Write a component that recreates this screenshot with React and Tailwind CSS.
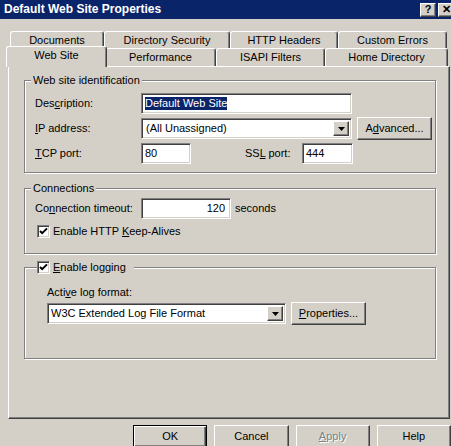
import React from "react";

const raised =
  "border border-t-white border-l-white border-r-[#404040] border-b-[#404040] shadow-[inset_-1px_-1px_0_#808080,inset_1px_1px_0_#d4d0c8]";
const sunken =
  "bg-white border border-t-[#808080] border-l-[#808080] border-b-white border-r-white shadow-[inset_1px_1px_0_#404040,inset_-1px_-1px_0_#d4d0c8]";
const etched =
  "relative border border-[#808080] shadow-[1px_1px_0_#fff,inset_1px_1px_0_#fff]";

const Arrow = () => (
  <div className={`${raised} bg-[#d4d0c8] w-[16px] h-full flex items-center justify-center`}>
    <svg width="7" height="4" viewBox="0 0 7 4">
      <polygon points="0,0 7,0 3.5,4" fill="#000" />
    </svg>
  </div>
);

const Check = ({ className = "" }) => (
  <div className={`${sunken} w-[13px] h-[13px] flex items-center justify-center shrink-0 ${className}`}>
    <svg width="9" height="9" viewBox="0 0 9 9">
      <polyline points="1,4 3.2,6.2 8,1.4" fill="none" stroke="#000" strokeWidth="2" />
    </svg>
  </div>
);

const Button = ({ children, className = "" }) => (
  <div className={`${raised} bg-[#d4d0c8] h-[23px] flex items-center justify-center ${className}`}>
    {children}
  </div>
);

const Tab = ({ label, w, selected }) => (
  <div
    className={`${w} flex items-center justify-center rounded-t-[3px] border-t border-l border-t-white border-l-white border-r border-r-[#404040] shadow-[inset_-1px_0_0_#808080] bg-[#d4d0c8] ${
      selected ? "relative z-10 h-[21px] self-start -mt-[2px] -mx-[2px] pb-[3px]" : "h-full"
    }`}
  >
    {label}
  </div>
);

export default function App() {
  return (
    <div className="w-[451px] h-[446px] overflow-hidden bg-[#d4d0c8] text-[11px] leading-[13px] text-black font-['Liberation_Sans',Arial,sans-serif]">
      {/* title bar */}
      <div className="h-[19px] bg-[#0a246a] flex items-center justify-between pl-[4px]">
        <span className="text-white font-bold text-[12px]">Default Web Site Properties</span>
        <div className="flex gap-[2px] -mr-[3px]">
          <Button className="!h-[14px] w-[16px] font-bold text-[11px]">?</Button>
          <Button className="!h-[14px] w-[16px] font-bold text-[11px]">✕</Button>
        </div>
      </div>

      {/* tabs */}
      <div className="mt-[12px] pl-[8px]">
        <div className="flex pl-[2px] h-[17px]">
          <Tab label="Documents" w="w-[94px]" />
          <Tab label="Directory Security" w="w-[126px]" />
          <Tab label="HTTP Headers" w="w-[108px]" />
          <Tab label="Custom Errors" w="w-[109px]" />
        </div>
        <div className="flex h-[18px]">
          <Tab label="Web Site" w="w-[101px]" selected />
          <Tab label="Performance" w="w-[111px]" />
          <Tab label="ISAPI Filters" w="w-[109px]" />
          <Tab label="Home Directory" w="w-[123px]" />
        </div>
      </div>

      {/* panel */}
      <div className="ml-[8px] w-[442px] h-[353px] border border-t-white border-l-white border-r-[#404040] border-b-[#404040] shadow-[inset_-1px_-1px_0_#808080] pt-[13px] pl-[15px]">
        {/* Web site identification */}
        <div className={`${etched} w-[412px] pt-[12px] pb-[8px] pl-[10px]`}>
          <span className="absolute left-[6px] -top-[7px] bg-[#d4d0c8] px-[2px]">Web site identification</span>
          <div className="flex flex-col gap-[4px]">
            <div className="flex items-center h-[21px]">
              <span className="w-[106px]">
                Des<u>c</u>ription:
              </span>
              <div className={`${sunken} w-[211px] h-[21px] flex items-center pl-[3px]`}>
                <span className="bg-[#0a246a] text-white">Default Web Site</span>
              </div>
            </div>
            <div className="flex items-center h-[21px]">
              <span className="w-[106px]">
                <u>I</u>P address:
              </span>
              <div className={`${sunken} w-[211px] h-[21px] flex items-center p-[2px]`}>
                <span className="flex-1 pl-[2px]">(All Unassigned)</span>
                <Arrow />
              </div>
              <Button className="ml-[5px] w-[75px]">
                A<u>d</u>vanced...
              </Button>
            </div>
            <div className="flex items-center h-[21px]">
              <span className="w-[106px]">
                <u>T</u>CP port:
              </span>
              <div className={`${sunken} w-[50px] h-[21px] flex items-center pl-[3px]`}>80</div>
              <span className="ml-[54px] w-[57px]">
                SS<u>L</u> port:
              </span>
              <div className={`${sunken} w-[51px] h-[21px] flex items-center pl-[3px]`}>444</div>
            </div>
          </div>
        </div>

        {/* Connections */}
        <div className={`${etched} w-[412px] mt-[15px] pt-[9px] pb-[15px] pl-[10px]`}>
          <span className="absolute left-[6px] -top-[7px] bg-[#d4d0c8] px-[2px]">Connections</span>
          <div className="flex items-center h-[21px]">
            <span className="w-[106px]">
              Co<u>n</u>nection timeout:
            </span>
            <div className={`${sunken} w-[90px] h-[21px] flex items-center justify-end pr-[5px]`}>120</div>
            <span className="ml-[4px]">seconds</span>
          </div>
          <div className="flex items-center gap-[3px] mt-[6px] pl-[2px] h-[13px]">
            <Check />
            <span>
              Enable HTTP <u>K</u>eep-Alives
            </span>
          </div>
        </div>

        {/* Logging */}
        <div className={`${etched} w-[412px] mt-[13px] h-[92px] pt-[18px] pl-[22px]`}>
          <div className="absolute left-[12px] -top-[7px] bg-[#d4d0c8] pr-[8px] flex items-center gap-[3px]">
            <Check />
            <span>
              <u>E</u>nable logging
            </span>
          </div>
          <div>
            Acti<u>v</u>e log format:
          </div>
          <div className="flex items-center mt-[4px] h-[21px]">
            <div className={`${sunken} w-[239px] h-[21px] flex items-center p-[2px]`}>
              <span className="flex-1 pl-[1px]">W3C Extended Log File Format</span>
              <Arrow />
            </div>
            <Button className="ml-[5px] w-[75px]">
              <u>P</u>roperties...
            </Button>
          </div>
        </div>
      </div>

      {/* bottom buttons */}
      <div className="flex gap-[7px] pl-[133px] mt-[6px]">
        <div className="w-[75px] h-[23px] border border-black bg-[#d4d0c8] shadow-[inset_1px_1px_0_#fff,inset_-1px_-1px_0_#404040,inset_-2px_-2px_0_#808080] flex items-center justify-center">
          OK
        </div>
        <Button className="w-[75px]">Cancel</Button>
        <Button className="w-[75px] text-[#808080] [text-shadow:1px_1px_0_#fff]">
          <u>A</u>pply
        </Button>
        <Button className="w-[75px]">Help</Button>
      </div>
    </div>
  );
}
